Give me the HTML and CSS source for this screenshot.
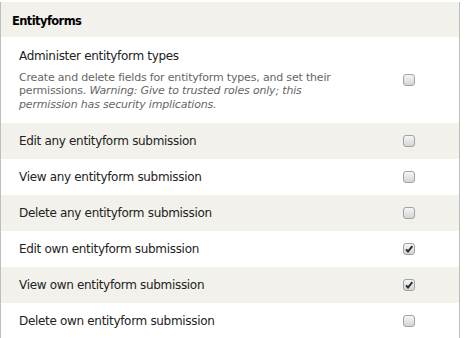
FILE: index.html
```html
<!DOCTYPE html>
<html>
<head>
<meta charset="utf-8">
<link rel="stylesheet" href="styles.css">
</head>
<body>
<div class="perm-table">
  <div class="module-row">Entityforms</div>
  <div class="perm-row white tall">
    <div class="perm-label">
      <div class="perm-title">Administer entityform types</div>
      <div class="perm-desc">Create and delete fields for entityform types, and set their permissions. <em>Warning: Give to trusted roles only; this permission has security implications.</em></div>
    </div>
    <div class="perm-check"><span class="cb"></span></div>
  </div>
  <div class="perm-row grey">
    <div class="perm-label"><div class="perm-title">Edit any entityform submission</div></div>
    <div class="perm-check"><span class="cb"></span></div>
  </div>
  <div class="perm-row white">
    <div class="perm-label"><div class="perm-title">View any entityform submission</div></div>
    <div class="perm-check"><span class="cb"></span></div>
  </div>
  <div class="perm-row grey">
    <div class="perm-label"><div class="perm-title">Delete any entityform submission</div></div>
    <div class="perm-check"><span class="cb"></span></div>
  </div>
  <div class="perm-row white">
    <div class="perm-label"><div class="perm-title">Edit own entityform submission</div></div>
    <div class="perm-check"><span class="cb checked"><svg viewBox="0 0 12 12" width="12" height="12"><path d="M3 6.3 L5 8.5 L9.3 3.2" fill="none" stroke="#2b2b2b" stroke-width="1.9"/></svg></span></div>
  </div>
  <div class="perm-row grey">
    <div class="perm-label"><div class="perm-title">View own entityform submission</div></div>
    <div class="perm-check"><span class="cb checked"><svg viewBox="0 0 12 12" width="12" height="12"><path d="M3 6.3 L5 8.5 L9.3 3.2" fill="none" stroke="#2b2b2b" stroke-width="1.9"/></svg></span></div>
  </div>
  <div class="perm-row white">
    <div class="perm-label"><div class="perm-title">Delete own entityform submission</div></div>
    <div class="perm-check"><span class="cb"></span></div>
  </div>
</div>
</body>
</html>
```
FILE: styles.css
```css
html, body {
  margin: 0;
  padding: 0;
  background: #fff;
}
body {
  padding-top: 2px;
  font-family: "DejaVu Sans", Verdana, sans-serif;
  color: #333;
}
.perm-table {
  width: 458px;
  border-left: 1px solid #bebfb9;
  border-right: 1px solid #bebfb9;
}
.module-row {
  background: #f2f1eb;
  height: 35px;
  box-sizing: border-box;
  padding: 12px 0 0 11px;
  font-weight: bold;
  font-size: 11.5px;
  letter-spacing: -0.6px;
  line-height: 14px;
  color: #000;
}
.perm-row {
  display: flex;
  height: 36px;
  box-sizing: border-box;
}
.perm-row.white { background: #fff; }
.perm-row.grey { background: #f2f1eb; }
.perm-row.tall { height: 86px; }
.perm-label {
  flex: 1;
  display: flex;
  flex-direction: column;
  justify-content: center;
  padding-left: 18px;
}
.perm-row.tall .perm-label {
  justify-content: flex-start;
  padding-top: 12px;
}
.perm-title {
  font-size: 12px;
  letter-spacing: -0.32px;
  line-height: 15px;
  color: #222;
}
.perm-desc {
  margin-top: 7px;
  font-size: 11px;
  letter-spacing: -0.18px;
  line-height: 13.4px;
  color: #666;
  width: 330px;
}
.perm-desc em { font-style: italic; }
.perm-check {
  width: 56px;
  display: flex;
  align-items: center;
}
.cb {
  display: block;
  width: 12px;
  height: 12px;
  box-sizing: border-box;
  border: 1px solid #a2a2a2;
  border-radius: 3px;
  background: linear-gradient(#f6f6f6, #d4d4d4);
  position: relative;
}
.cb svg {
  position: absolute;
  left: -1px;
  top: -1px;
}
```
